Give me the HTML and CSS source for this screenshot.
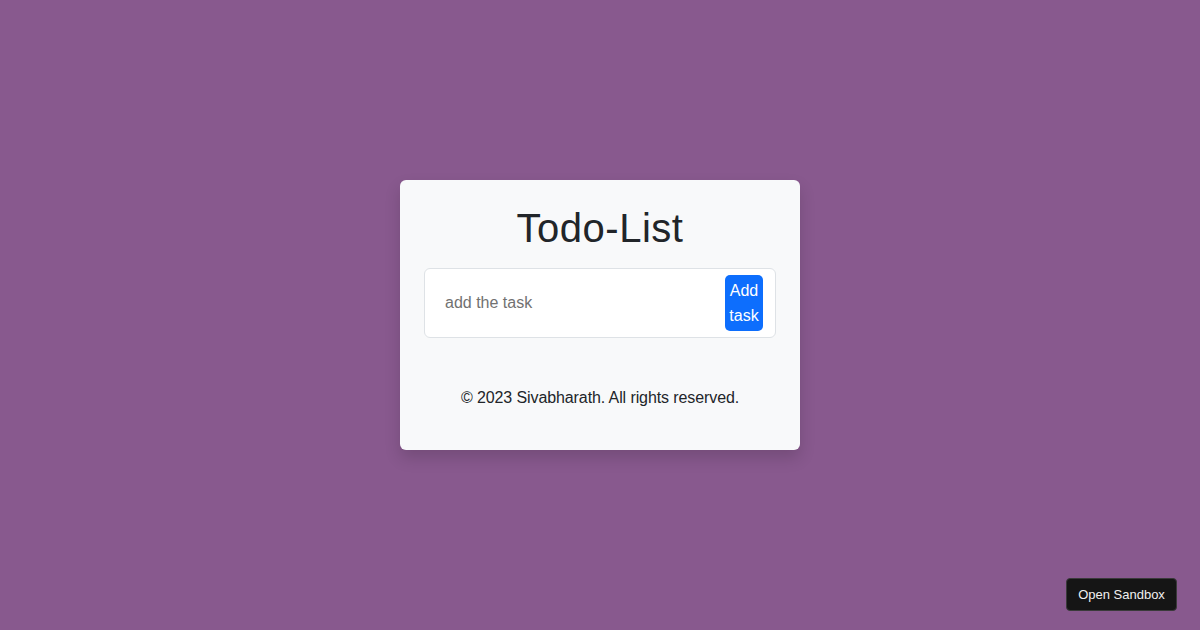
FILE: index.html
```html
<!DOCTYPE html>
<html>
<head>
<meta charset="utf-8">
<link rel="stylesheet" href="styles.css">
</head>
<body>
<main class="page">
  <section class="card">
    <h1 class="title">Todo-List</h1>
    <div class="input-group">
      <input class="task-input" type="text" placeholder="add the task">
      <button class="add-btn">Add task</button>
    </div>
    <ul class="task-list"></ul>
    <footer class="footer">© 2023 Sivabharath. All rights reserved.</footer>
  </section>
</main>
<button class="sandbox-btn">Open Sandbox</button>
</body>
</html>
```
FILE: styles.css
```css
* { box-sizing: border-box; }
html, body { margin: 0; height: 100%; }
body {
  background: #88598e;
  font-family: "Liberation Sans", Arial, sans-serif;
  color: #212529;
  font-size: 16px;
  line-height: 1.5;
}
.page {
  height: 630px;
  display: flex;
  align-items: flex-start;
  justify-content: center;
  padding-top: 180px;
}
.card {
  width: 400px;
  background: #f8f9fa;
  border-radius: 6px;
  box-shadow: 0 8px 16px rgba(0,0,0,0.15);
  padding: 24px 24px 40px;
}
.title {
  margin: 0 0 16px;
  text-align: center;
  font-size: 40px;
  font-weight: 400;
  line-height: 48px;
  letter-spacing: 0.5px;
}
.input-group {
  display: flex;
  align-items: center;
  background: #fff;
  border: 1px solid #dee2e6;
  border-radius: 6px;
  height: 70px;
  padding: 6px 12px 6px 20px;
}
.task-input {
  flex: 1;
  border: none;
  outline: none;
  background: transparent;
  font-family: inherit;
  font-size: 16px;
  color: #212529;
  padding: 0;
}
.task-input::placeholder { color: #717171; }
.add-btn {
  width: 38px;
  background: #0d6efd;
  color: #fff;
  border: none;
  border-radius: 5px;
  font-family: inherit;
  font-size: 16px;
  line-height: 25px;
  padding: 3px 0;
  text-align: center;
}
.task-list {
  margin: 0;
  padding: 0;
  list-style: none;
}
.footer {
  margin-top: 48px;
  text-align: center;
  font-size: 16px;
  line-height: 24px;
  letter-spacing: -0.1px;
}
.sandbox-btn {
  position: fixed;
  right: 23px;
  bottom: 19px;
  width: 111px;
  height: 33px;
  background: #151515;
  color: #f0f0f0;
  border: 1px solid #3a3a3a;
  border-radius: 4px;
  font-family: "Liberation Sans", Arial, sans-serif;
  font-size: 13px;
  padding: 0;
}
```
